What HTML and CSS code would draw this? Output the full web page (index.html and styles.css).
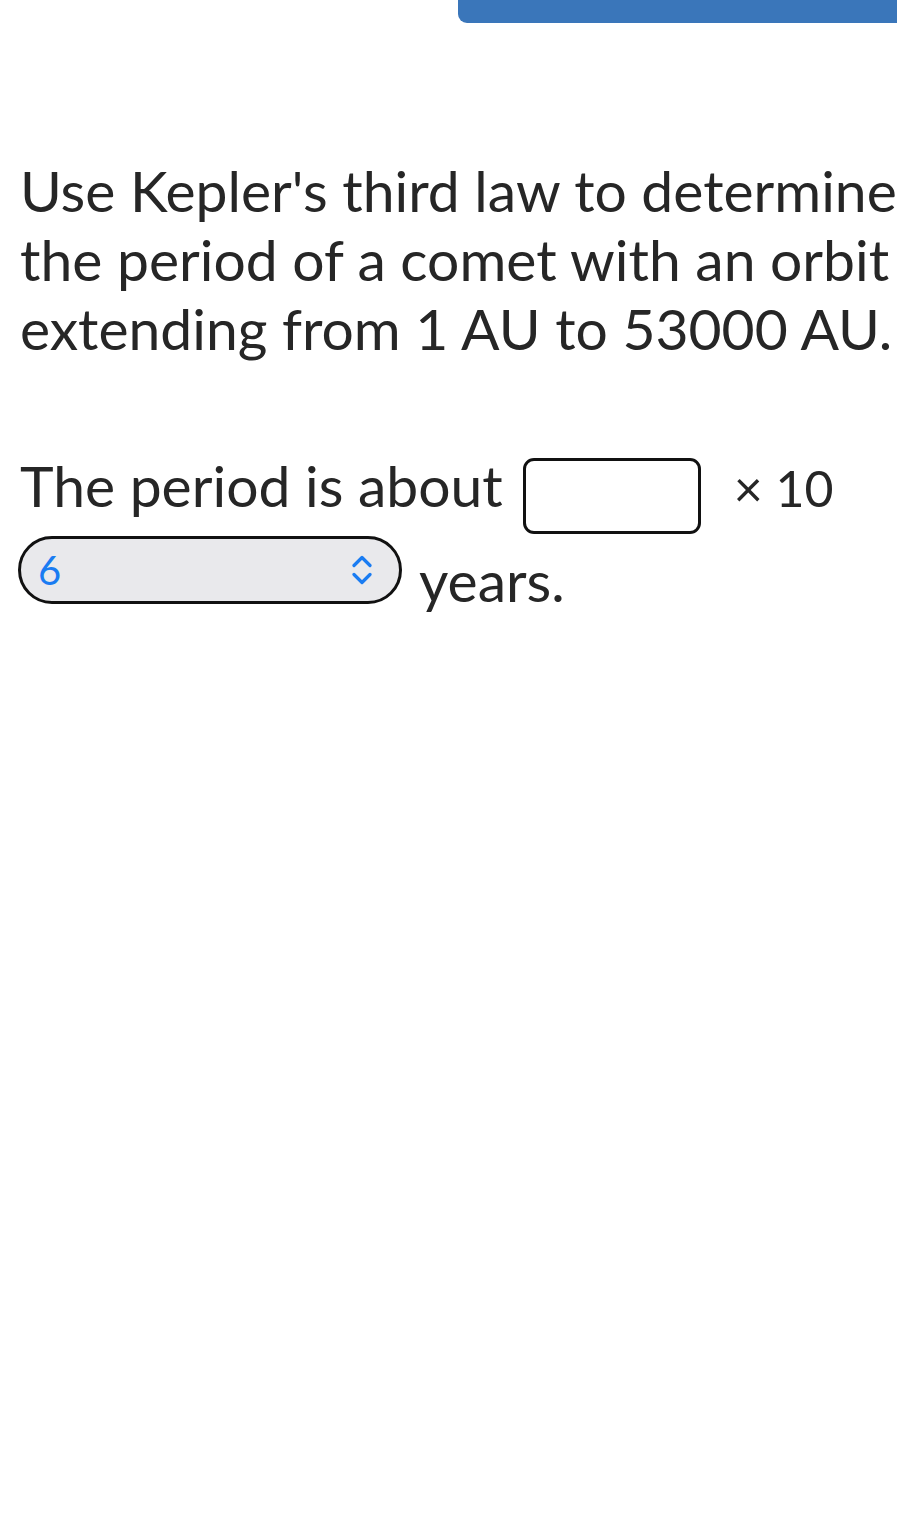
FILE: index.html
```html
<!DOCTYPE html>
<html lang="en">
<head>
    <meta charset="UTF-8">
    <meta name="viewport" content="width=device-width, initial-scale=1.0">
    <title>Kepler's third law</title>
    <link rel="stylesheet" href="styles.css">
</head>
<body>
    <div class="top-bar"></div>
    <div class="question">
        <p class="prompt">Use Kepler's third law to determine<br>the period of a comet with an orbit<br>extending from 1 AU to 53000 AU.</p>
        <div class="answer">
            <div class="answer-line">
                <span class="label">The period is about</span>
                <input class="answer-box" type="text">
                <span class="times">&times; 10</span>
            </div>
            <div class="answer-line second">
                <div class="exponent">
                    <span class="exponent-value">6</span>
                    <svg class="chevrons" width="20" height="30" viewBox="0 0 20 30">
                        <path d="M2 10.5 L10 2.5 L18 10.5" fill="none" stroke="#1a7cf2" stroke-width="3.2" stroke-linecap="round" stroke-linejoin="round"/>
                        <path d="M2 19.5 L10 27.5 L18 19.5" fill="none" stroke="#1a7cf2" stroke-width="3.2" stroke-linecap="round" stroke-linejoin="round"/>
                    </svg>
                </div>
                <span class="years">years.</span>
            </div>
        </div>
    </div>
</body>
</html>
```

FILE: styles.css
```css
body {
    margin: 0;
    font-family: Lato, "Open Sans", sans-serif;
    color: #262626;
    background: #fff;
}

.top-bar {
    margin-left: 458px;
    height: 23px;
    background: #3a76ba;
    border-bottom-left-radius: 9px;
}

.question {
    padding: 0 0 0 20px;
}

.prompt {
    margin: 133px 0 0;
    font-size: 57px;
    line-height: 69px;
    white-space: nowrap;
}

.answer {
    margin-top: 95px;
    font-size: 57px;
}

.answer-line {
    display: flex;
    align-items: flex-start;
}

.label {
    line-height: 54px;
}

.answer-box {
    width: 178px;
    height: 76px;
    margin-left: 20px;
    padding: 0;
    border: 3px solid #111;
    border-radius: 11px;
    background: #fff;
    box-sizing: border-box;
}

.times {
    margin-left: 33px;
    margin-top: 3px;
    font-size: 50px;
    line-height: 54px;
}

.second {
    margin-top: 2px;
}

.exponent {
    display: flex;
    align-items: center;
    justify-content: space-between;
    width: 384px;
    height: 68px;
    box-sizing: border-box;
    margin-left: -2px;
    padding: 0 27px 0 17px;
    border: 3px solid #111;
    border-radius: 34px;
    background: #e9e9ec;
}

.exponent-value {
    color: #1a7cf2;
    font-size: 40px;
}

.years {
    margin-left: 17px;
    margin-top: 10px;
    line-height: 69px;
}
```
